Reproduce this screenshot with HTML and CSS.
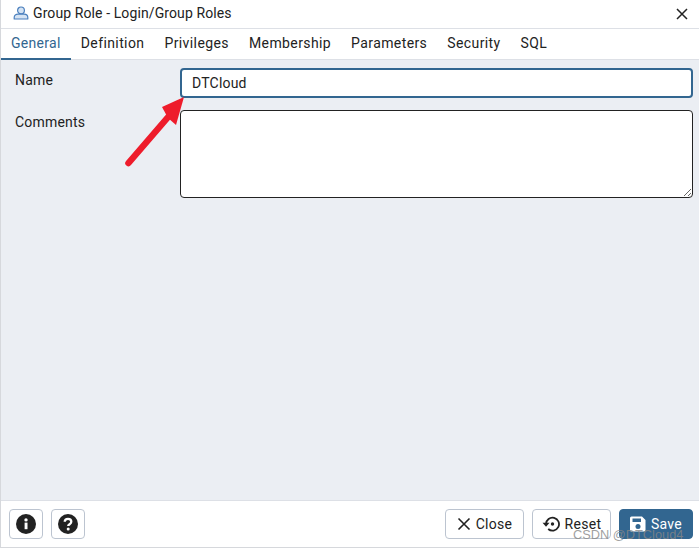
FILE: index.html
```html
<!DOCTYPE html>
<html lang="en">
<head>
  <meta charset="UTF-8">
  <title>Group Role - Login/Group Roles</title>
  <link rel="stylesheet" href="styles.css">
</head>
<body>

  <div class="dialog">
    <div class="title-bar">
      <div class="title">
        <svg class="role-icon" width="16" height="14" viewBox="0 0 16 14">
          <circle cx="8" cy="4.4" r="3.4" fill="#d5e3f3" stroke="#4a7fbd" stroke-width="1.2"/>
          <path d="M1.2 13v-1.6C1.2 9.4 3 8.2 5 8.2h6c2 0 3.8 1.2 3.8 3.2V13z" fill="#d5e3f3" stroke="#4a7fbd" stroke-width="1.2" stroke-linejoin="round"/>
        </svg>
        <span>Group Role - Login/Group Roles</span>
      </div>
      <svg class="close-x" width="12" height="12" viewBox="0 0 12 12">
        <path d="M1 1l10 10M11 1L1 11" stroke="#222" stroke-width="1.5" fill="none"/>
      </svg>
    </div>

    <div class="tabs">
      <div class="tab active">General</div>
      <div class="tab">Definition</div>
      <div class="tab">Privileges</div>
      <div class="tab">Membership</div>
      <div class="tab">Parameters</div>
      <div class="tab">Security</div>
      <div class="tab">SQL</div>
    </div>

    <div class="content">
      <div class="row">
        <label class="label" for="name">Name</label>
        <input id="name" class="field focused" type="text" value="DTCloud">
      </div>
      <div class="row">
        <label class="label" for="comments">Comments</label>
        <textarea id="comments" class="field area"></textarea>
      </div>
    </div>

    <div class="footer">
      <div class="group">
        <button class="btn square" type="button">
          <svg width="20" height="20" viewBox="0 0 20 20">
            <circle cx="10" cy="10" r="10" fill="#222"/>
            <rect x="8.6" y="8.6" width="2.9" height="6.6" fill="#fff"/>
            <circle cx="10" cy="5.9" r="1.7" fill="#fff"/>
          </svg>
        </button>
        <button class="btn square" type="button">
          <svg width="20" height="20" viewBox="0 0 20 20">
            <circle cx="10" cy="10" r="10" fill="#222"/>
            <path d="M6.7 7.8C6.8 5.9 8.2 4.9 10 4.9c1.9 0 3.3 1.1 3.3 2.8 0 2.5-3.1 2.4-3.1 4.3" fill="none" stroke="#fff" stroke-width="2.3"/>
            <circle cx="10.2" cy="15" r="1.5" fill="#fff"/>
          </svg>
        </button>
      </div>
      <div class="group">
        <button class="btn" type="button">
          <svg width="14" height="14" viewBox="0 0 14 14">
            <path d="M1.5 1.5l11 11M12.5 1.5l-11 11" stroke="#222" stroke-width="1.6" fill="none"/>
          </svg>
          Close
        </button>
        <button class="btn" type="button">
          <svg width="18" height="16" viewBox="0 0 18 16">
            <path d="M4 8a6.5 6.5 0 1 1 2.2 5" fill="none" stroke="#222" stroke-width="1.8"/>
            <path d="M0.5 6.800h7L4 10.800z" fill="#222"/>
            <circle cx="10.5" cy="8" r="1.7" fill="#222"/>
          </svg>
          Reset
        </button>
        <button class="btn primary" type="button">
          <svg width="16" height="16" viewBox="0 0 16 16">
            <path d="M1.5 0.5h10.5l3.500 3.500v10a1.500 1.500 0 0 1-1.500 1.500H1.500A1.500 1.500 0 0 1 0 14V2A1.500 1.500 0 0 1 1.500 0.500z" fill="#fff"/>
            <rect x="2.5" y="2.5" width="8.5" height="3.5" fill="#326690"/>
            <circle cx="8" cy="10.5" r="2.5" fill="#326690"/>
          </svg>
          Save
        </button>
      </div>
    </div>

    <!-- annotation over the screenshot -->
    <svg class="arrow" width="70" height="75" viewBox="0 0 70 75">
      <path d="M5.5 68L46 21" stroke="#ee1c2b" stroke-width="6.5" stroke-linecap="round" fill="none"/>
      <path d="M61 2L53 30 45 23 39 12z" fill="#ee1c2b"/>
    </svg>
    <div class="watermark">CSDN @DTCloud4</div>
  </div>

</body>
</html>
```

FILE: styles.css
```css
html, body {
  margin: 0;
  padding: 0;
  height: 100%;
  overflow: hidden;
  background-color: #fff;
}

.dialog {
  position: relative;
  display: flex;
  flex-direction: column;
  width: 699px;
  height: 548px;
  box-sizing: border-box;
  border-left: 1px solid #d6d8dc;
  border-bottom: 1px solid #d6d8dc;
  font-family: Roboto, sans-serif;
  font-size: 14px;
  color: #222;
}

.title-bar {
  display: flex;
  align-items: center;
  justify-content: space-between;
  height: 28px;
  padding: 0 11px 0 12px;
  border-bottom: 1px solid #dde0e6;
}

.title {
  display: flex;
  align-items: center;
  gap: 4px;
  padding-bottom: 2px;
  font-size: 14px;
  letter-spacing: 0.1px;
}

.tabs {
  display: flex;
  height: 30px;
  border-bottom: 1px solid #dde0e6;
}

.tab {
  padding: 6px 10px 0;
  letter-spacing: 0.4px;
  color: #222;
}

.tab.active {
  color: #326690;
  letter-spacing: 0.3px;
  border-bottom: 2px solid #326690;
  margin-bottom: -1px;
}

.content {
  flex: 1;
  background-color: #ebeef3;
  padding: 8px 6px 0 14px;
  display: flex;
  flex-direction: column;
  gap: 12px;
}

.row {
  display: flex;
}

.label {
  width: 165px;
  flex: none;
  padding-top: 4px;
  line-height: 16px;
  letter-spacing: 0.2px;
}

.field {
  flex: 1;
  box-sizing: border-box;
  margin: 0;
  border: 1px solid #222;
  border-radius: 4px;
  background-color: #fff;
  font-family: Roboto, sans-serif;
  font-size: 14px;
  color: #222;
  outline: none;
}

.focused {
  height: 30px;
  padding: 0 10px;
  border: 2px solid #326690;
  letter-spacing: 0.2px;
}

.area {
  height: 88px;
  display: block;
  resize: vertical;
}

.footer {
  display: flex;
  align-items: center;
  justify-content: space-between;
  height: 46px;
  padding: 0 6px 0 8px;
  border-top: 1px solid #dde0e6;
}

.group {
  display: flex;
  gap: 8px;
}

.btn {
  display: flex;
  align-items: center;
  justify-content: center;
  gap: 5px;
  width: 79px;
  height: 30px;
  padding: 0;
  border: 1px solid #bcc4d0;
  border-radius: 4px;
  background-color: #fff;
  font-family: Roboto, sans-serif;
  font-size: 14px;
  letter-spacing: 0.3px;
  color: #222;
}

.btn.square {
  width: 34px;
}

.btn.primary {
  width: 74px;
  border-color: #326690;
  background-color: #326690;
  color: #fff;
}

.arrow {
  position: absolute;
  left: 122px;
  top: 95px;
}

.watermark {
  position: absolute;
  left: 572px;
  top: 527px;
  font-family: "Liberation Sans", sans-serif;
  font-size: 12.8px;
  color: rgba(135, 135, 135, 0.8);
  white-space: nowrap;
}
```
